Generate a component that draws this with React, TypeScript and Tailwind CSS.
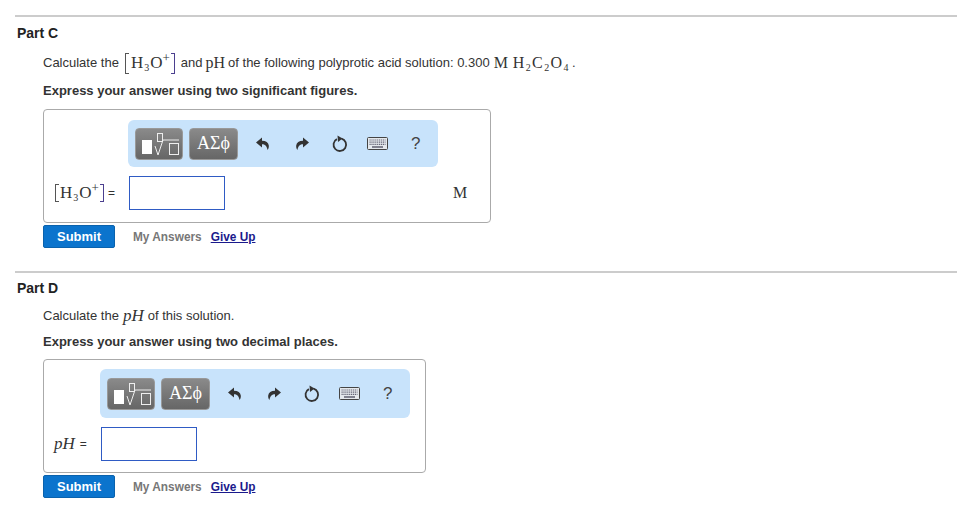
const serif = "font-['Liberation_Serif',serif]";

function Sub({ children }: any) {
    return <sub className="text-[10px] align-baseline relative top-[3px] leading-none mx-[1px]">{children}</sub>;
}

function H3O({ size = "big" }: { size?: string }) {
    return (
        <span className={`${serif} inline-flex items-center text-[#333] text-[17px]`}>
            <span className={`inline-block w-[4px] border-l border-t border-b border-[#555] ${size === "big" ? "h-[21px] mr-[2px]" : "h-[18px] mr-[1px]"}`} />
            <span>H<Sub>3</Sub>O<sup className="text-[13px] align-baseline relative top-[-6px] leading-none">+</sup></span>
            <span className={`inline-block w-[4px] border-r border-t border-b border-[#4b3f8f] ${size === "big" ? "h-[21px] ml-[1px]" : "h-[18px] ml-[1px]"}`} />
        </span>
    );
}

function Toolbar({ className }: { className: string }) {
    return (
        <div className={`w-[310px] h-[47px] bg-[#c8e3fb] rounded-[6px] flex items-center pl-[7px] text-[#333] ${className}`}>
            <div className="w-[48px] h-[32px] rounded-[4px] bg-gradient-to-b from-[#8a8a8a] to-[#666] border border-[#999]">
                <svg width="46" height="30" viewBox="1 1 46 30" fill="none" stroke="#eee" strokeWidth="1">
                    <rect x="7" y="12" width="10" height="14" fill="#fff" stroke="none" />
                    <rect x="22.5" y="5.5" width="5" height="8" />
                    <path d="M20 18l3 9 5-15h16" />
                    <rect x="34.5" y="15.5" width="9" height="11" />
                </svg>
            </div>
            <div className={`${serif} ml-[6px] w-[49px] h-[32px] rounded-[4px] bg-gradient-to-b from-[#8a8a8a] to-[#666] border border-[#999] text-white text-[18px] flex items-center justify-center`}>
                ΑΣϕ
            </div>
            <svg className="ml-[17px]" width="16" height="16" viewBox="0 0 16 16" fill="#333">
                <path d="M7 1.5 1 6.5l6 5V8.3c3 0 4.6 1.6 5.6 5.7.9-1 1.4-2.6 1.2-4.4C13.4 6.4 11 4.9 7 4.8z" />
            </svg>
            <svg className="ml-[23px]" width="16" height="16" viewBox="0 0 16 16" fill="#333">
                <path d="M9 1.5l6 5-6 5V8.3c-3 0-4.6 1.6-5.6 5.7-.9-1-1.4-2.6-1.2-4.4C2.6 6.4 5 4.9 9 4.8z" />
            </svg>
            <svg className="ml-[21px]" width="18" height="18" viewBox="0 0 18 18" fill="none">
                <path d="M10.5 3.6a6.3 6.3 0 1 1-4.6.5" stroke="#333" strokeWidth="1.8" />
                <path d="M6.5 0.5 11.5 3.6 7 7z" fill="#333" />
            </svg>
            <svg className="ml-[18px]" width="21" height="13" viewBox="0 0 21 13" fill="none">
                <rect x="0.5" y="0.5" width="20" height="12" rx="1" fill="#e4e8ec" stroke="#444" />
                <path d="M2.5 3h16M2.5 5.2h16M2.5 7.4h16" stroke="#667" strokeWidth="1.2" strokeDasharray="1.2 .7" />
                <path d="M5 10h11" stroke="#556" strokeWidth="1.4" />
            </svg>
            <span className="ml-[23px] text-[17px] font-['Liberation_Sans',sans-serif] text-[#444]">?</span>
        </div>
    );
}

function Actions() {
    return (
        <div className="flex items-center mt-[2px]">
            <button type="button" className="w-[72px] h-[23px] rounded-[2px] bg-[#0b74cd] border border-[#0a62ad] text-white text-[13px] font-bold pt-[1px]">
                Submit
            </button>
            <span className="ml-[18px] mt-[2px] text-[11.85px] font-bold text-[#777]">My Answers</span>
            <a className="ml-[9px] mt-[2px] text-[11.85px] font-bold text-[#1a1a8c] underline">Give Up</a>
        </div>
    );
}

export default function App() {
    return (
        <div className="w-[957px] h-[509px] bg-white overflow-hidden pl-[15px] pt-[15px] font-['Liberation_Sans',sans-serif] text-[#333]">
            <div className="h-[2px] bg-[#ccc]" />
            <h2 className="mt-[7px] ml-[2px] text-[14px] leading-[18px] font-bold text-[#222]">Part C</h2>
            <div className="ml-[28px]">
                <p className="mt-[9px] h-[24px] flex items-center gap-[3px] text-[13px] whitespace-nowrap">
                    <span className="mr-[3px]">Calculate the</span><H3O /><span className="ml-[3px]">and</span>
                    <span className={`${serif} text-[16px]`}>pH</span>
                    <span>of the following polyprotic acid solution: 0.300</span>
                    <span className={`${serif} text-[16px] ml-[1px] tracking-[0.4px]`}>M H<Sub>2</Sub>C<Sub>2</Sub>O<Sub>4</Sub></span>
                    <span className="ml-[-1px]">.</span>
                </p>
                <p className="mt-[8px] text-[13px] leading-[16px] font-bold">Express your answer using two significant figures.</p>
                <div className="mt-[10px] w-[448px] h-[114px] border border-[#aaa] rounded-[4px] pt-[10px]">
                    <Toolbar className="ml-[84px]" />
                    <div className="mt-[9px] flex items-center ml-[11px]">
                        <span className="w-[74px] flex items-center gap-[4px] text-[12px]"><H3O size="small" /> =</span>
                        <div className="w-[96px] h-[34px] border border-[#2f5bc4]" />
                        <span className={`${serif} ml-[228px] text-[16px]`}>M</span>
                    </div>
                </div>
                <Actions />
            </div>

            <div className="h-[2px] bg-[#ccc] mt-[23px]" />
            <h2 className="mt-[6px] ml-[2px] text-[14px] leading-[18px] font-bold text-[#222]">Part D</h2>
            <div className="ml-[28px]">
                <p className="mt-[9px] h-[20px] flex items-center gap-[4px] text-[13px] whitespace-nowrap">
                    <span>Calculate the</span><i className={`${serif} text-[17px]`}>pH</i><span>of this solution.</span>
                </p>
                <p className="mt-[8px] text-[13px] leading-[16px] font-bold">Express your answer using two decimal places.</p>
                <div className="mt-[9px] w-[383px] h-[114px] border border-[#aaa] rounded-[4px] pt-[9px]">
                    <Toolbar className="ml-[56px] h-[49px]" />
                    <div className="mt-[9px] flex items-center ml-[10px]">
                        <span className="w-[47px] flex items-center gap-[5px] text-[12px]"><i className={`${serif} text-[17px]`}>pH</i> =</span>
                        <div className="w-[96px] h-[34px] border border-[#2f5bc4]" />
                    </div>
                </div>
                <Actions />
            </div>
        </div>
    );
}
